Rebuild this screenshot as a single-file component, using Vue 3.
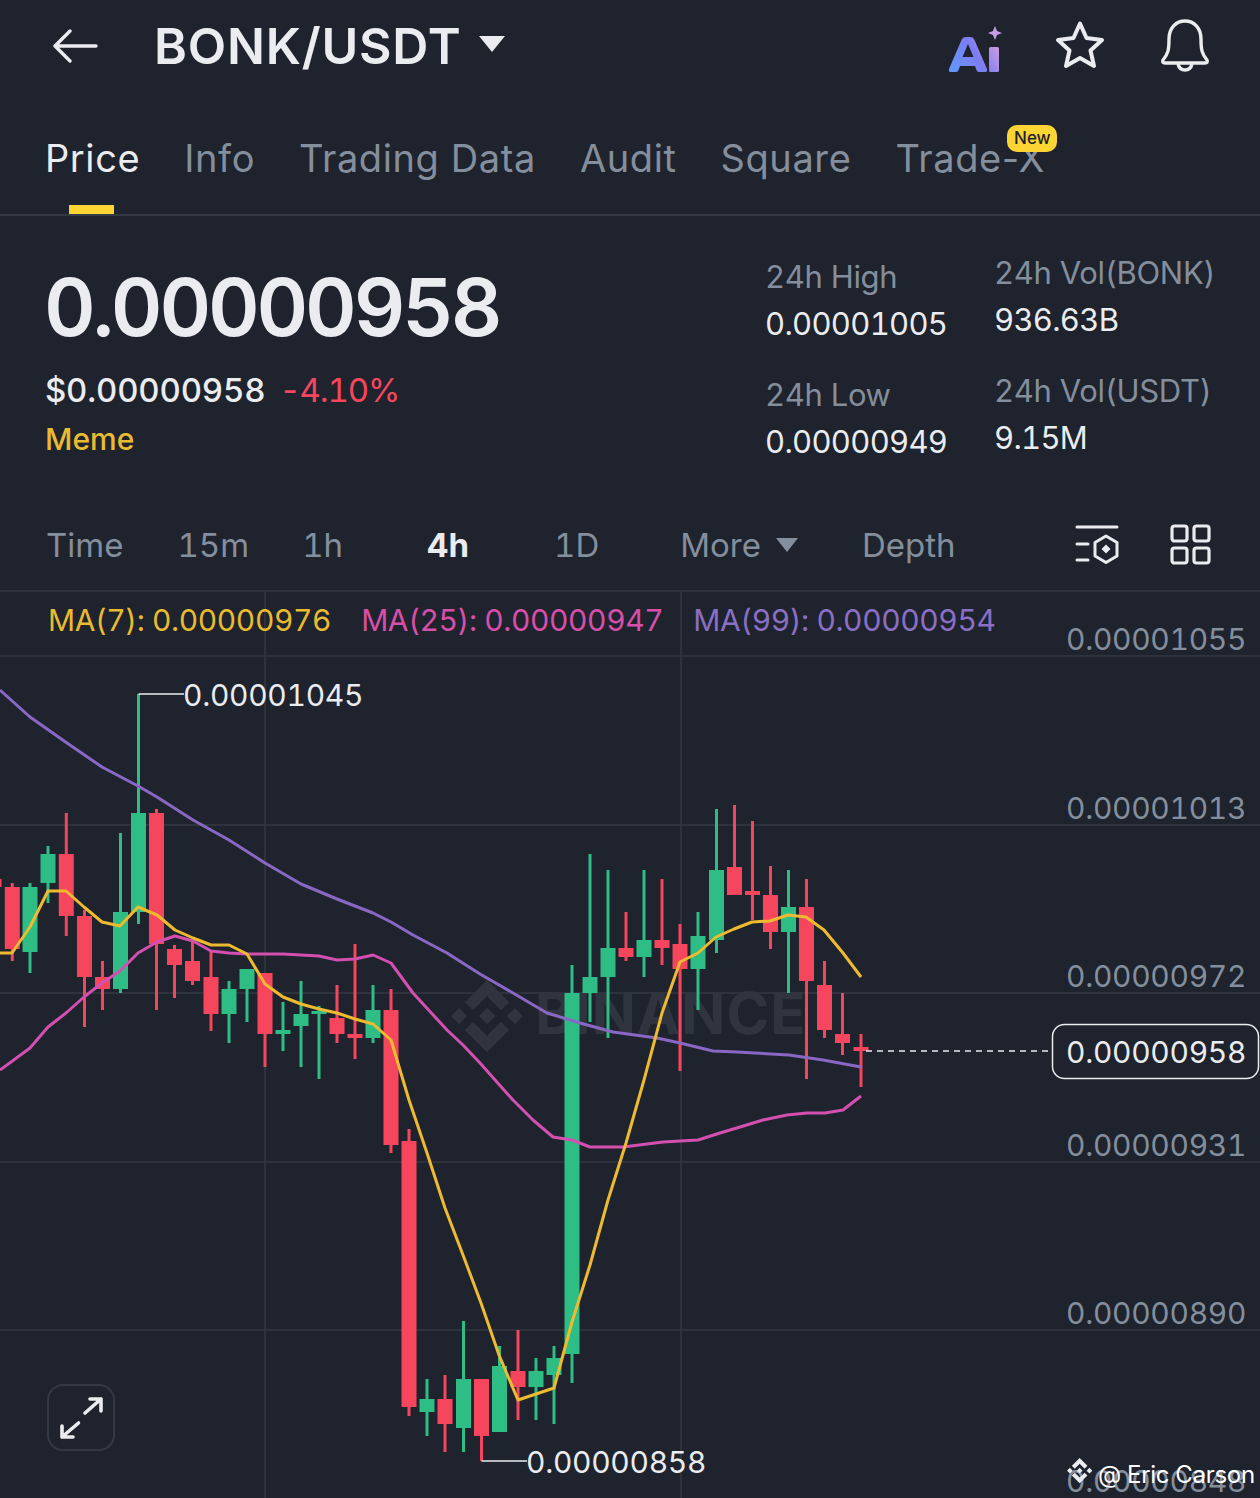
<script setup>
const tabs = ["Price", "Info", "Trading Data", "Audit", "Square", "Trade-X"];
const intervals = ["Time", "15m", "1h", "4h", "1D"];

// [x, up?, high, bodyTop, bodyBottom, low] in page pixels
const candles = [
  [-6, 0, 879, 879, 887, 960],
  [12.3, 0, 883, 887, 949, 961],
  [30, 1, 883, 887, 952, 973],
  [48, 1, 846, 854, 883, 903],
  [66.3, 0, 813, 854, 916, 936],
  [84.5, 0, 910, 916, 977, 1027],
  [102.5, 0, 961, 977, 989, 1010],
  [120.5, 1, 833, 912, 989, 993],
  [138.5, 1, 694, 813, 912, 924],
  [156.5, 0, 809, 813, 944, 1010],
  [174.5, 0, 945, 949, 965, 998],
  [192.5, 0, 942, 961, 981, 985],
  [211, 0, 950, 977, 1014, 1031],
  [229, 1, 981, 989, 1014, 1043],
  [247, 1, 969, 969, 989, 1022],
  [265, 0, 973, 973, 1034, 1067],
  [283, 1, 1002, 1030, 1034, 1051],
  [301, 1, 981, 1014, 1026, 1067],
  [319, 1, 1006, 1011, 1014, 1079],
  [337, 0, 985, 1018, 1034, 1043],
  [355, 0, 944, 1034, 1038, 1059],
  [373, 1, 985, 1010, 1038, 1043],
  [391, 0, 989, 1010, 1145, 1153],
  [409, 0, 1129, 1141, 1407, 1416],
  [427, 1, 1379, 1399, 1412, 1436],
  [445, 0, 1375, 1399, 1424, 1452],
  [463.5, 1, 1321, 1379, 1428, 1452],
  [481.5, 0, 1379, 1379, 1436, 1461],
  [499.5, 1, 1346, 1366, 1432, 1432],
  [518, 0, 1330, 1371, 1387, 1420],
  [536, 1, 1358, 1371, 1387, 1420],
  [554, 1, 1346, 1358, 1375, 1424],
  [572, 1, 965, 993, 1354, 1383],
  [590, 1, 854, 977, 993, 1022],
  [608, 1, 870, 948, 977, 1038],
  [626, 0, 912, 948, 957, 961],
  [644, 1, 870, 940, 957, 977],
  [662, 0, 879, 940, 948, 965],
  [680, 0, 924, 944, 969, 1071],
  [698, 1, 912, 936, 969, 1010],
  [716.5, 1, 809, 870, 940, 953],
  [734.5, 0, 805, 867, 895, 895],
  [752.5, 0, 821, 891, 895, 920],
  [770.5, 0, 866, 895, 932, 949],
  [788.5, 1, 870, 907, 932, 993],
  [806.5, 0, 879, 907, 981, 1079],
  [824.5, 0, 961, 985, 1030, 1038],
  [842.5, 0, 993, 1034, 1043, 1055],
  [861, 0, 1034, 1047, 1051, 1087],
];

const ma7 = "0,953 12,953 30,927 48,891 66,891 84,907 102,922 120,926 138,907 157,915 175,930 193,938 211,945 229,945 247,954 265,984 283,997 301,1004 319,1009 337,1013 355,1019 373,1024 391,1040 409,1100 427,1153 445,1208 463,1255 481,1303 499,1355 518,1400 536,1394 554,1388 572,1322 590,1265 608,1200 626,1143 644,1080 662,1013 680,962 698,953 716,937 734,929 752,922 770,921 788,915 806,917 824,930 843,953 861,977";
const ma25 = "0,1070 30,1048 48,1027 66,1013 84,997 102,983 120,971 138,953 157,942 175,936 193,941 211,951 229,953 247,954 265,954 283,954 301,955 319,956 337,960 355,959 373,955 391,963 413,993 447,1030 463,1045 480,1063 513,1100 533,1120 553,1137 572,1140 590,1147 623,1147 663,1142 698,1140 720,1133 740,1127 763,1120 787,1115 807,1113 825,1113 843,1110 861,1096";
const ma99 = "0,690 30,717 67,743 102,767 138,786 157,797 193,820 229,840 265,863 301,884 337,899 373,913 391,922 413,935 447,953 480,974 513,993 547,1013 580,1023 613,1032 657,1038 680,1043 713,1051 737,1052 789,1055 823,1060 861,1067";

const axis = [
  ["0.00001055", 650],
  ["0.00001013", 819],
  ["0.00000972", 987],
  ["0.00000931", 1156],
  ["0.00000890", 1324],
  ["0.00000848", 1492],
];
const gridY = [656, 825, 993, 1162, 1330];
const logo = "M38.73 53.2l24.59-24.58 24.6 24.6 14.3-14.31L63.32 0 24.42 38.9zM0 63.31l14.3-14.31 14.31 14.31-14.31 14.3zM38.73 73.41l24.59 24.59 24.6-24.6 14.31 14.29-38.9 38.91-38.91-38.88v-.03zM98 63.31l14.3-14.31 14.31 14.3-14.31 14.32zM77.83 63.3L63.32 48.78 52.59 59.51l-1.24 1.23-2.54 2.54 14.51 14.5 14.51-14.47z";
</script>

<template>
  <div class="page">
    <header class="top">
      <svg class="back" width="46" height="34" viewBox="0 0 46 34">
        <path d="M44 17H3M18 2 3 17l15 15" fill="none" stroke="#eaecef" stroke-width="3.4" stroke-linecap="round" stroke-linejoin="round" />
      </svg>
      <h1 class="pair">BONK/USDT</h1>
      <span class="caret caret-big"></span>
      <div class="top-icons">
        <svg class="ai" width="56" height="52" viewBox="0 0 56 52">
          <defs>
            <linearGradient id="aiGrad" gradientUnits="userSpaceOnUse" x1="0" y1="52" x2="54" y2="22">
              <stop offset="0" stop-color="#5f9bff" />
              <stop offset="0.55" stop-color="#7d7df2" />
              <stop offset="1" stop-color="#d8a2de" />
            </linearGradient>
          </defs>
          <path d="M2 49 14.500 20q1.200-3 4.500-3h4q3.300 0 4.500 3l12.500 29q1 3-2 3h-6q-2 0-2.600-2l-1.400-4H13l-1.400 4q-.6 2-2.600 2H4q-3 0-2-3zM15.500 37h11L21 24z" fill="url(#aiGrad)" fill-rule="evenodd" />
          <rect x="42" y="27" width="10" height="25" rx="1.500" fill="url(#aiGrad)" />
          <path d="M48 6 50 11 55 13 50 15 48 20 46 15 41 13 46 11z" fill="#c99ee6" />
        </svg>
        <svg class="star" width="52" height="50" viewBox="0 0 52 50">
          <path d="M26 3.500 32.500 18 48 20 36.500 30.500 40 46 26 38 12 46 15.500 30.500 4 20 19.500 18z" fill="none" stroke="#eaecef" stroke-width="4" stroke-linejoin="round" />
        </svg>
        <svg class="bell" width="52" height="54" viewBox="0 0 52 54">
          <path d="M4 41C9 35 10 31 10 20 10 9 17 2 26 2s16 7 16 18c0 11 1 15 6 21 1 2 0 3-2 3H6c-2 0-3-1-2-3z" fill="none" stroke="#eaecef" stroke-width="3.400" stroke-linejoin="round" />
          <path d="M19 45c1 4 4 6 7 6s6-2 7-6" fill="none" stroke="#eaecef" stroke-width="3.400" />
        </svg>
      </div>
    </header>

    <nav class="tabs">
      <div v-for="(tab, i) in tabs" :key="tab" :class="['tab', { active: i === 0 }]">
        {{ tab }}
        <span v-if="tab === 'Trade-X'" class="new-badge">New</span>
      </div>
    </nav>

    <section class="summary">
      <div class="summary-left">
        <div class="last-price">0.00000958</div>
        <div class="sub-price">$0.00000958<span class="change">-4.10%</span></div>
        <div class="tag">Meme</div>
      </div>
      <div class="stats stats-a">
        <div class="stat-label">24h High</div>
        <div class="stat-value">0.00001005</div>
        <div class="stat-label">24h Low</div>
        <div class="stat-value">0.00000949</div>
      </div>
      <div class="stats stats-b">
        <div class="stat-label">24h Vol(BONK)</div>
        <div class="stat-value">936.63B</div>
        <div class="stat-label">24h Vol(USDT)</div>
        <div class="stat-value">9.15M</div>
      </div>
    </section>

    <div class="toolbar">
      <span v-for="item in intervals" :key="item" :class="['interval', { current: item === '4h' }]">{{ item }}</span>
      <span class="interval more">More<span class="caret"></span></span>
      <span class="interval depth">Depth</span>
      <svg class="tool-a" width="44" height="44" viewBox="0 0 44 44">
        <g fill="none" stroke="#eaecef" stroke-width="3" stroke-linecap="round">
          <path d="M2 3h40M2 20h11M2 36h11" />
          <path d="M31 12 42 18.500V32L31 38.500 20 32V18.500z" stroke-linejoin="round" />
        </g>
        <path d="M31 20.500 35.500 25 31 29.500 26.500 25z" fill="#eaecef" />
      </svg>
      <svg class="tool-b" width="42" height="42" viewBox="0 0 42 42">
        <g fill="none" stroke="#eaecef" stroke-width="3.200">
          <rect x="2" y="2" width="15" height="15" rx="2.500" />
          <rect x="24" y="2" width="15" height="15" rx="2.500" />
          <rect x="2" y="24" width="15" height="15" rx="2.500" />
          <rect x="24" y="24" width="15" height="15" rx="2.500" />
        </g>
      </svg>
    </div>

    <div class="chart">
      <svg class="plot" width="1260" height="906" viewBox="0 592 1260 906">
        <line v-for="y in gridY" :key="y" class="grid" x1="0" x2="1260" :y1="y" :y2="y" />
        <line class="grid" x1="265" x2="265" y1="592" y2="1498" />
        <line class="grid" x1="681" x2="681" y1="592" y2="1498" />

        <g class="watermark">
          <path :d="logo" transform="translate(451 980) scale(0.57)" />
          <text x="535" y="1034">BINANCE</text>
        </g>

        <g v-for="c in candles" :key="c[0]" :class="c[1] ? 'up' : 'down'">
          <rect :x="c[0] - 1.5" :y="c[2]" width="3" :height="c[5] - c[2]" />
          <rect :x="c[0] - 7.5" :y="c[3]" width="15" :height="c[4] - c[3]" />
        </g>

        <polyline class="ma ma99" :points="ma99" />
        <polyline class="ma ma25" :points="ma25" />
        <polyline class="ma ma7" :points="ma7" />

        <path class="callout" d="M138.500 694H184M481.500 1461H527" />
        <text class="extreme" x="183" y="706">0.00001045</text>
        <text class="extreme" x="526" y="1473">0.00000858</text>

        <text v-for="a in axis" :key="a[0]" class="axis" x="1066" :y="a[1]">{{ a[0] }}</text>

        <line class="last-line" x1="866" x2="1052" y1="1051" y2="1051" />
        <rect class="last-box" x="1052.500" y="1024.500" width="206" height="54" rx="12" />
        <text class="last-text" x="1066" y="1063">0.00000958</text>

        <path :d="logo" class="credit-logo" transform="translate(1067 1458) scale(0.2)" />
        <text class="credit" x="1098" y="1483">@ Eric Carson</text>
      </svg>

      <div class="legend">
        <span class="l7">MA(7): 0.00000976</span>
        <span class="l25">MA(25): 0.00000947</span>
        <span class="l99">MA(99): 0.00000954</span>
      </div>

      <div class="expand">
        <svg width="46" height="44" viewBox="0 0 46 44">
          <g fill="none" stroke="#eaecef" stroke-width="3.600" stroke-linecap="round" stroke-linejoin="round">
            <path d="M27 17 43 3M32 3h11v12" />
            <path d="M20.500 27 4 41M4 30v11h11" />
          </g>
        </svg>
      </div>
    </div>
  </div>
</template>

<style>
html,
body {
  margin: 0;
  background: #1e232d;
}
</style>

<style scoped>
.page {
  width: 1260px;
  height: 1498px;
  overflow: hidden;
  background: #1e232d;
  color: #eaecef;
  font-family: Inter, "Liberation Sans", sans-serif;
  font-variant-numeric: tabular-nums;
}

.top {
  display: flex;
  align-items: center;
  height: 92px;
  padding: 0 49px 0 52px;
}
.back {
  margin-right: 56px;
}
.pair {
  margin: 0;
  font-size: 50px;
  font-weight: 600;
  letter-spacing: 0.8px;
}
.caret {
  display: inline-block;
  width: 0;
  height: 0;
  border-left: 11px solid transparent;
  border-right: 11px solid transparent;
  border-top: 14px solid #848e9c;
}
.caret-big {
  margin-left: 17px;
  border-left-width: 13px;
  border-right-width: 13px;
  border-top: 16px solid #eaecef;
  margin-top: -4px;
}
.top-icons {
  margin-left: auto;
  display: flex;
  align-items: center;
}
.star {
  margin: -3px 0 0 51px;
}
.bell {
  margin: -1px 0 0 53px;
}

.tabs {
  display: flex;
  gap: 44px;
  height: 124px;
  padding: 43px 45px 0;
  box-sizing: border-box;
  border-bottom: 2px solid #333a44;
  font-size: 38px;
  font-variant-numeric: normal;
  line-height: 46px;
  letter-spacing: 0.6px;
}
.tab {
  position: relative;
  color: #848e9c;
}
.tab.active {
  color: #eaecef;
}
.tab.active::after {
  content: "";
  position: absolute;
  left: 24px;
  width: 45px;
  height: 9px;
  top: 70px;
  background: #fcd535;
}
.new-badge {
  position: absolute;
  left: 112px;
  top: -10px;
  width: 50px;
  height: 27px;
  border-radius: 10px;
  background: #fcd535;
  color: #1e2329;
  font-size: 17px;
  line-height: 27px;
  text-align: center;
  font-weight: 500;
  letter-spacing: 0;
}

.summary {
  display: flex;
  height: 270px;
  padding-left: 45px;
  box-sizing: border-box;
}
.summary-left {
  width: 720px;
  padding-top: 49px;
}
.last-price {
  margin-left: -1px;
  font-size: 80px;
  line-height: 84px;
  font-weight: 600;
  letter-spacing: -3.200px;
}
.sub-price {
  margin-top: 21px;
  font-size: 33px;
  line-height: 40px;
  font-weight: 500;
  letter-spacing: -0.2px;
}
.change {
  margin-left: 14px;
  color: #f6465d;
  font-weight: 400;
  letter-spacing: -1.200px;
}
.tag {
  margin-top: 9px;
  font-size: 30px;
  line-height: 40px;
  color: #e8bb30;
  font-weight: 500;
}
.stats {
  display: flex;
  flex-direction: column;
}
.stats-a {
  width: 229px;
  padding-top: 41px;
}
.stats-b {
  padding-top: 37px;
}
.stat-label {
  color: #848e9c;
  font-size: 31px;
  line-height: 40px;
  letter-spacing: -0.3px;
}
.stat-value {
  margin-top: 7px;
  font-size: 31px;
  line-height: 40px;
  margin-bottom: 31px;
  letter-spacing: -0.7px;
}

.toolbar {
  display: flex;
  align-items: center;
  height: 106px;
  padding: 14px 48px 0 46px;
  box-sizing: border-box;
  border-bottom: 2px solid #2c323c;
  font-size: 33px;
  color: #848e9c;
}
.interval:nth-child(2) {
  margin-left: 54px;
}
.interval:nth-child(3) {
  margin-left: 53px;
}
.interval:nth-child(4) {
  margin-left: 84px;
}
.interval:nth-child(5) {
  margin-left: 85px;
}
.more {
  margin-left: 81px;
  display: flex;
  align-items: center;
  gap: 15px;
}
.depth {
  margin-left: 64px;
}
.current {
  color: #eaecef;
  font-weight: 700;
}
.tool-a {
  margin: 2px 0 0 auto;
}
.tool-b {
  margin-left: 51px;
}

.chart {
  position: relative;
  height: 906px;
}
.plot {
  display: block;
}
.grid {
  stroke: #333842;
  stroke-width: 1.500;
}
.up {
  fill: #2ebd85;
}
.down {
  fill: #f6465d;
}
.ma {
  fill: none;
  stroke-width: 3;
  stroke-linejoin: round;
}
.ma7 {
  stroke: #eebb30;
}
.ma25 {
  stroke: #d34fb0;
}
.ma99 {
  stroke: #8a67c4;
}
.watermark {
  fill: #2f343e;
}
.watermark text {
  font-size: 58px;
  font-weight: 700;
  letter-spacing: 1px;
}
.callout {
  fill: none;
  stroke: #eaecef;
  stroke-width: 1.500;
}
.extreme,
.axis,
.last-text {
  font-size: 30px;
  letter-spacing: -0.3px;
}
.extreme,
.last-text {
  fill: #eaecef;
}
.axis {
  fill: #848e9c;
}
.last-line {
  stroke: #eaecef;
  stroke-width: 1.500;
  stroke-dasharray: 6 5;
}
.last-box {
  fill: #1e232d;
  stroke: #eaecef;
  stroke-width: 1.500;
}
.credit-logo {
  fill: #eaecef;
}
.credit {
  fill: #fff;
  font-size: 24px;
  letter-spacing: -0.3px;
}
.legend {
  position: absolute;
  left: 48px;
  top: 8px;
  display: flex;
  gap: 30px;
  font-size: 30px;
  line-height: 40px;
  letter-spacing: -0.4px;
}
.l7 {
  color: #e8bb30;
}
.l25 {
  color: #d84fa9;
}
.l99 {
  color: #8a6fc4;
}
.expand {
  position: absolute;
  left: 47px;
  top: 792px;
  width: 68px;
  height: 67px;
  box-sizing: border-box;
  border: 2.500px solid #343a45;
  border-radius: 16px;
  display: flex;
  align-items: center;
  justify-content: center;
}
</style>
